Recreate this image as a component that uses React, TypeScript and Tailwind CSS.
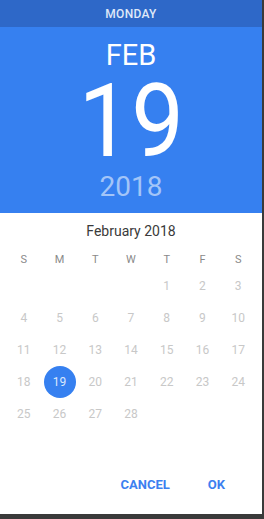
import React from "react";

const weekdays = ["S", "M", "T", "W", "T", "F", "S"];

const weeks: (number | null)[][] = [
  [null, null, null, null, 1, 2, 3],
  [4, 5, 6, 7, 8, 9, 10],
  [11, 12, 13, 14, 15, 16, 17],
  [18, 19, 20, 21, 22, 23, 24],
  [25, 26, 27, 28, null, null, null],
];

const SELECTED = 19;

export default function App() {
  return (
    <div className="h-[519px] w-[264px] bg-[#3a3a3a] font-['Roboto',sans-serif]">
      <div className="flex h-[514px] w-[262px] flex-col bg-white">
        {/* header */}
        <div className="flex h-[27px] items-center justify-center bg-[#2e68c8] text-[12px] font-medium tracking-wide text-[#dfe8f8]">
          MONDAY
        </div>
        <div className="flex h-[186px] flex-col items-center bg-[#3680f0] text-white">
          <div className="mt-[12px] text-[29px] leading-[32px]">FEB</div>
          <div className="mt-[10px] scale-x-[0.92] text-[102px] leading-[80px]">19</div>
          <div className="mt-[11px] text-[28px] leading-[30px] text-[#a3c5f8]">2018</div>
        </div>

        {/* calendar */}
        <div className="px-[6px]">
          <div className="mt-[9px] text-center text-[14px] leading-[18px] text-[#3a3a3a]">February 2018</div>
          <div className="mt-[13px] grid grid-cols-7 text-center text-[11px] leading-[14px] text-[#8a8a8a]">
            {weekdays.map((d, i) => (
              <div key={i}>{d}</div>
            ))}
          </div>
          <div className="mt-[3px] flex flex-col">
            {weeks.map((week, wi) => (
              <div key={wi} className="grid h-[32px] grid-cols-7">
                {week.map((day, di) => (
                  <div key={di} className="flex items-center justify-center">
                    {day === null ? null : day === SELECTED ? (
                      <span className="flex h-[32px] w-[32px] items-center justify-center rounded-full bg-[#3680f0] text-[12px] text-[#dce8fc]">
                        {day}
                      </span>
                    ) : (
                      <span className="text-[12px] text-[#c8c8c8]">{day}</span>
                    )}
                  </div>
                ))}
              </div>
            ))}
          </div>
        </div>

        {/* actions */}
        <div className="mt-auto mb-[20px] flex justify-end gap-[38px] pr-[37px] text-[13px] font-bold text-[#3c80f0]">
          <span>CANCEL</span>
          <span>OK</span>
        </div>
      </div>
    </div>
  );
}
